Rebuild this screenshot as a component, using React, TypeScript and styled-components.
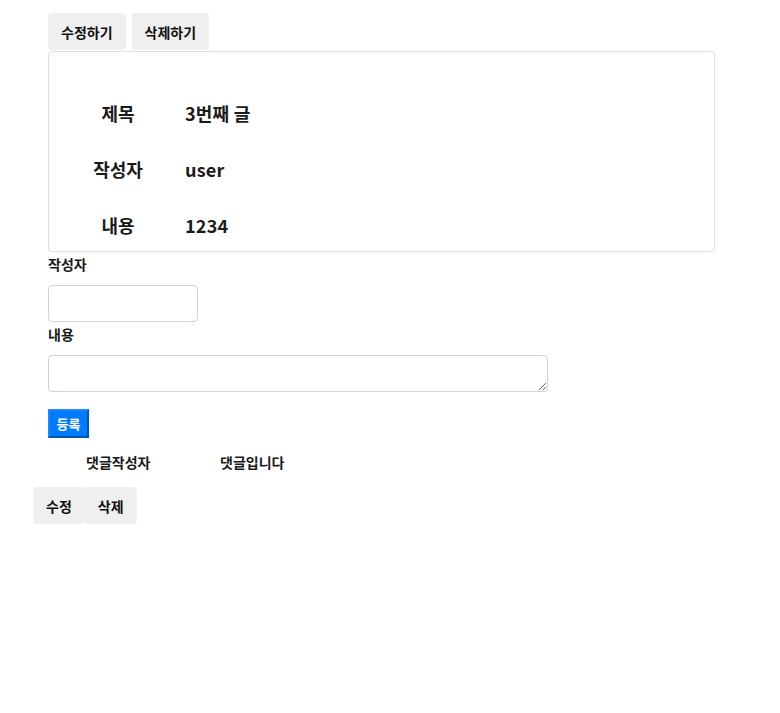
import React from "react";
import styled, { createGlobalStyle } from "styled-components";

const Global = createGlobalStyle`
  body {
    margin: 0;
    background: #fff;
    font-family: "Noto Sans CJK KR", "Noto Sans", sans-serif;
    color: #1a1a1a;
  }
`;

const Page = styled.div`
  padding: 13px 0 0 48px;
`;

const Toolbar = styled.div`
  display: flex;
  gap: 6px;
  margin-bottom: 1px;
`;

const GrayButton = styled.button`
  height: 37px;
  padding: 0 13px;
  border: none;
  border-radius: 4px;
  background: #efefef;
  font-family: inherit;
  font-size: 14px;
  font-weight: 700;
  color: #111;
  cursor: pointer;
`;

const Card = styled.div`
  width: 667px;
  height: 201px;
  box-sizing: border-box;
  border: 1px solid #dedede;
  border-radius: 4px;
  padding: 33px 0 0 19px;
`;

const InfoGrid = styled.div`
  display: grid;
  grid-template-columns: 100px 1fr;
  column-gap: 17px;
  grid-auto-rows: 56px;
  align-items: center;
`;

const InfoLabel = styled.div`
  text-align: center;
  font-size: 18px;
  font-weight: 700;
`;

const InfoValue = styled.div`
  font-size: 18px;
  font-weight: 700;
  letter-spacing: 0.2px;
`;

const Form = styled.div`
  display: flex;
  flex-direction: column;
  align-items: flex-start;
`;

const FieldLabel = styled.label`
  display: block;
  height: 24px;
  line-height: 24px;
  font-size: 14px;
  font-weight: 700;
  margin-bottom: 9px;
`;

const TextInput = styled.input`
  width: 150px;
  height: 37px;
  box-sizing: border-box;
  border: 1px solid #ced4da;
  border-radius: 4px;
  margin: 0;
`;

const TextArea = styled.textarea`
  width: 500px;
  height: 37px;
  box-sizing: border-box;
  border: 1px solid #ced4da;
  border-radius: 4px;
  margin: 0;
  display: block;
`;

const SubmitButton = styled.button`
  margin-top: 17px;
  width: 41px;
  height: 29px;
  box-sizing: border-box;
  background: #007bff;
  color: #fff;
  border-width: 2px;
  border-style: solid;
  border-color: #1a88ff #0056b3 #0056b3 #1a88ff;
  font-family: inherit;
  font-size: 13px;
  font-weight: 700;
  padding: 0;
`;

const CommentRow = styled.div`
  display: grid;
  grid-template-columns: 134px auto;
  height: 28px;
  align-items: center;
  margin-top: 10px;
  padding-left: 38px;
  font-size: 14px;
  font-weight: 700;
`;

const CommentActions = styled.div`
  display: flex;
  margin: 11px 0 0 -15px;
`;

const SmallButton = styled(GrayButton)`
  padding: 0 13px;
`;

export default function App() {
  return (
    <>
      <Global />
      <Page>
        <Toolbar>
          <GrayButton>수정하기</GrayButton>
          <GrayButton>삭제하기</GrayButton>
        </Toolbar>
        <Card>
          <InfoGrid>
            <InfoLabel>제목</InfoLabel>
            <InfoValue>3번째 글</InfoValue>
            <InfoLabel>작성자</InfoLabel>
            <InfoValue>user</InfoValue>
            <InfoLabel>내용</InfoLabel>
            <InfoValue>1234</InfoValue>
          </InfoGrid>
        </Card>
        <Form>
          <FieldLabel>작성자</FieldLabel>
          <TextInput />
          <FieldLabel>내용</FieldLabel>
          <TextArea />
          <SubmitButton>등록</SubmitButton>
        </Form>
        <CommentRow>
          <span>댓글작성자</span>
          <span>댓글입니다</span>
        </CommentRow>
        <CommentActions>
          <SmallButton>수정</SmallButton>
          <SmallButton>삭제</SmallButton>
        </CommentActions>
      </Page>
    </>
  );
}
